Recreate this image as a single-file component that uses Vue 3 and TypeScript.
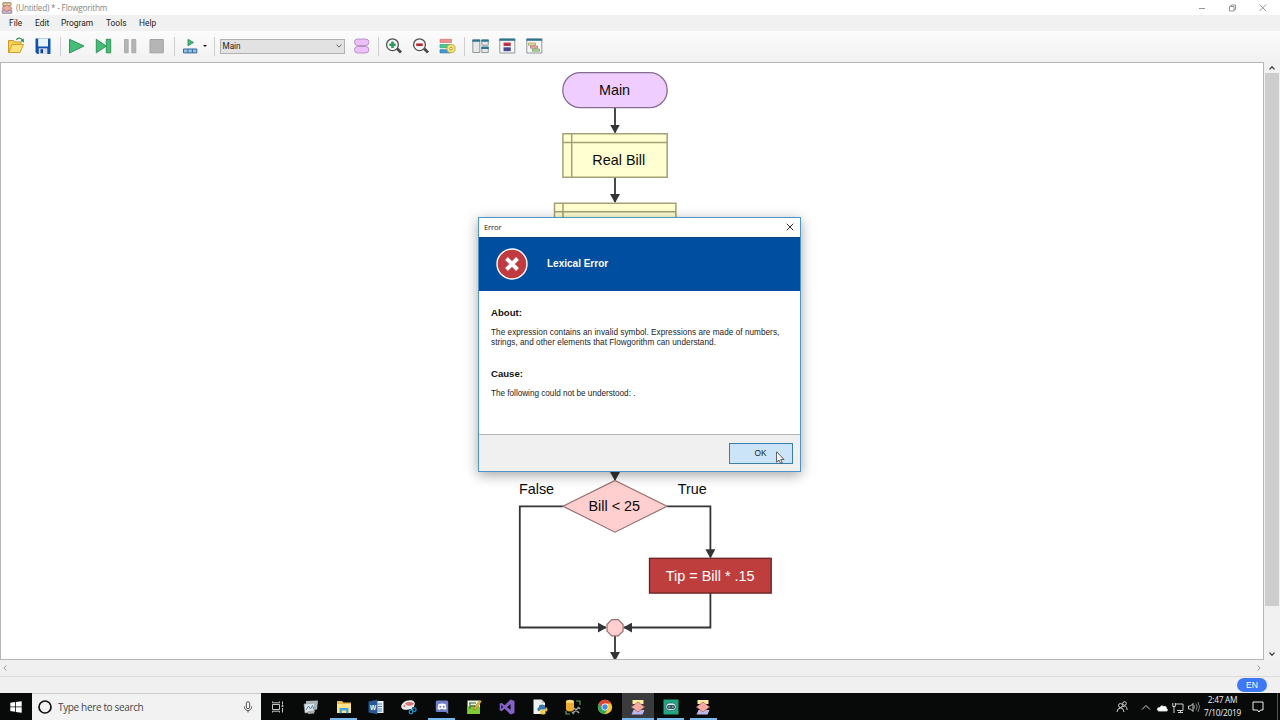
<script setup lang="ts">
interface MenuItem { label: string; width: number }

const menus: MenuItem[] = [
  { label: 'File', width: 26 },
  { label: 'Edit', width: 26 },
  { label: 'Program', width: 45 },
  { label: 'Tools', width: 33 },
  { label: 'Help', width: 30 },
]
</script>

<template>
  <div class="desktop">
    <header class="titlebar">
      <svg class="logo" viewBox="0 0 12 12" width="12" height="12">
        <path d="M2 .8h8l-1 3.5H2zM1.2 8h9.5v3.3H1.2z" fill="#c9b6dc" stroke="#8f7d74" stroke-width=".8" />
        <path d="M2 1h8v2.6H2z" fill="#eddca2" stroke="#9d8b58" stroke-width=".8" />
        <path d="M6 2.7 11 6.2 6 9.5 1 6.2z" fill="#f5a9a0" stroke="#a9766e" stroke-width=".8" />
      </svg>
      <span class="title">(Untitled) * - Flowgorithm</span>
      <svg class="winbtns" viewBox="0 0 80 14" width="80" height="14" fill="none" stroke="#8a8a8a" stroke-width=".9">
        <path d="M-1 7.500h6M29.500 5.500h4.500V10h-4.500zM31 5.500V4h4.500v4.500H34M59.500 3.500l6.500 6.500M66 3.500 59.500 10" />
      </svg>
    </header>
    <nav class="menubar">
      <span v-for="m in menus" :key="m.label" :style="{ width: m.width + 'px' }">{{ m.label }}</span>
    </nav>
    <div class="toolbar">
      <svg class="tool" viewBox="0 0 27 24">
        <path d="M5.500 18.500V6.500h5l1.500 1.500h6v3" fill="#f5cf55" stroke="#c99a25" />
        <path d="M5.800 18.500 9 10.500h11.500l-3.500 8z" fill="#ffe17a" stroke="#d0a02c" />
        <path d="M13.500 6c1-2.500 4.500-2.500 6 .500" fill="none" stroke="#2f9156" stroke-width="1.300" />
        <path d="m20.800 4.500.200 4-3.600-1.500z" fill="#2f9156" />
      </svg>
      <svg class="tool" viewBox="0 0 27 24">
        <path d="M5.500 4.500h15V20H7.300l-1.800-1.800z" fill="#1252ae" />
        <path d="M8.200 4.500h9.800v8H8.200z" fill="#e9f3fb" />
        <path d="M8.800 14.300h8.500V20H8.800z" fill="#d5deed" />
        <path d="M10.500 15.200h2.500v4h-2.500z" fill="#123f91" />
      </svg>
      <i class="sep"></i>
      <svg class="tool" viewBox="0 0 27 24"><path d="M6.500 5.300v13.700L21 12z" fill="#43bd78" stroke="#33945b" /></svg>
      <svg class="tool" viewBox="0 0 27 24"><path d="M6.300 5.300v13.500l10-6.700zM16.300 5.300h4.400v13.500h-4.400z" fill="#43bd78" stroke="#33945b" /></svg>
      <svg class="tool" viewBox="0 0 27 24"><path d="M7.500 5.500h3.700v13.300H7.500zM14.800 5.500h4v13.300h-4z" fill="#b5b5b5" stroke="#a2a2a2" stroke-width=".8" /></svg>
      <svg class="tool" viewBox="0 0 27 24"><path d="M6 5.500h13.300v13.300H6z" fill="#b5b5b5" stroke="#a2a2a2" /></svg>
      <i class="sep"></i>
      <svg class="tool run-menu" viewBox="0 0 27 24">
        <path d="M11 5.300v6.500l5.500-3.300z" fill="#43bd78" stroke="#33805b" stroke-width=".8" />
        <path d="M6.500 15h13.300v3.900H6.500zM10.900 15v4M15.400 15v4" fill="#8fc5e8" stroke="#386a96" />
      </svg>
      <i class="drop"></i>
      <i class="sep wide"></i>
      <div class="combo">
        <span>Main</span>
        <svg viewBox="0 0 6 4" width="6" height="4"><path d="m.5.600 2.500 2.500L5.500.600" fill="none" stroke="#555" stroke-width=".9" /></svg>
      </div>
      <svg class="tool after-combo" viewBox="0 0 27 24">
        <rect x="6.500" y="5" width="14.300" height="6.500" rx="3" fill="#eebfff" stroke="#a684b3" stroke-width=".8" />
        <rect x="6.500" y="12.500" width="14.300" height="6.500" rx="3" fill="#eebfff" stroke="#a684b3" stroke-width=".8" />
      </svg>
      <i class="sep"></i>
      <svg class="tool" viewBox="0 0 27 24">
        <path d="m17 14.500 4 4" stroke="#4a4a4a" stroke-width="2.800" />
        <circle cx="12.500" cy="10.700" r="5.900" fill="#f7fbfa" stroke="#505050" stroke-width="1.300" />
        <path d="M12.500 7.500v6.400M9.300 10.700h6.400" stroke="#2f9c5c" stroke-width="2.600" />
      </svg>
      <svg class="tool" viewBox="0 0 27 24">
        <path d="m17 14.500 4 4" stroke="#4a4a4a" stroke-width="2.800" />
        <circle cx="12.500" cy="10.700" r="5.900" fill="#faf7f7" stroke="#505050" stroke-width="1.300" />
        <path d="M9.200 10.700h6.600" stroke="#b92b31" stroke-width="2.600" />
      </svg>
      <svg class="tool" viewBox="0 0 27 24">
        <path d="M6 5.300h11.500v3.200H6z" fill="#f08e8e" stroke="#ce7474" stroke-width=".7" />
        <path d="M6 10.500h10v3.200H6z" fill="#45cb94" stroke="#389e7b" stroke-width=".7" />
        <path d="M6 15.700h10v3.200H6z" fill="#3b99dc" stroke="#3979a9" stroke-width=".7" />
        <circle cx="17" cy="14.600" r="4.100" fill="#f8e777" stroke="#b7a236" stroke-width=".9" />
        <circle cx="17" cy="14.600" r="1.400" fill="#fffce0" stroke="#a29136" stroke-width=".9" />
      </svg>
      <i class="sep"></i>
      <svg class="tool" viewBox="0 0 27 24">
        <path d="M5.800 6h7v12.500h-7zM14.800 6h6.500v5.200h-6.500zM14.800 13h6.500v5.500h-6.500z" fill="#e7e9e9" stroke="#778186" stroke-width=".8" />
        <path d="M5.400 5.500h7.800v2.200H5.400zM14.400 5.500h7.300v2.200h-7.300zM14.400 12.700h7.300v2.200h-7.300z" fill="#2d758c" />
      </svg>
      <svg class="tool" viewBox="0 0 27 24">
        <path d="M5.800 5h15v14h-15z" fill="#f7f7f7" stroke="#778186" stroke-width=".8" />
        <path d="M5.400 4.600h15.800v2.200H5.400z" fill="#2d758c" />
        <path d="M9.500 8.500h7.300v3.600H9.500z" fill="#c73f4c" /><path d="M9.500 13.300h7.300v3.900H9.500z" fill="#414f9b" />
        <path d="M10.500 10.500h5M10.500 15h5" stroke="#722e53" stroke-width=".7" />
      </svg>
      <svg class="tool" viewBox="0 0 27 24">
        <path d="M5.800 5h15v14h-15z" fill="#f7f7f7" stroke="#778186" stroke-width=".8" />
        <path d="M5.400 4.600h15.800v2.200H5.400z" fill="#2d758c" />
        <path d="M7.500 9h7v2.300h-7z" fill="#e9e19a" stroke="#a1955c" stroke-width=".7" />
        <path d="M9.500 12h7v2.200h-7z" fill="#f1b4ae" stroke="#a96e6c" stroke-width=".7" />
        <path d="M11.500 15h7v2.200h-7z" fill="#b5dd9f" stroke="#6a965e" stroke-width=".7" />
      </svg>
    </div>

    <main class="workspace">
      <section class="canvas">
        <svg class="chart" viewBox="1 63 1262 596" width="1262" height="596">
          <defs>
            <marker id="arrow" viewBox="0 0 9 10" refX="8" refY="5" markerWidth="9" markerHeight="10" markerUnits="userSpaceOnUse" orient="auto">
              <path d="M0 0v10l9-5z" fill="#333537" />
            </marker>
          </defs>
          <g class="links">
            <path d="M615 108v24.500" /><path d="M615 178v24" /><path d="M615 460v20" />
            <path d="M563 506.300h-43.200v121.200h86" /><path d="M667 506.300h43.400v51" />
            <path d="M710.400 593v34.500h-86.200" /><path d="M615 636v24" />
          </g>
          <rect x="562.800" y="72.700" width="104.400" height="35" rx="17.500" fill="#efcdff" stroke="#856b91" stroke-width="1.300" />
          <g fill="#ffffd1" stroke="#a4a176" stroke-width="1.500">
            <path d="M562.900 133.700h104.300v43.600H562.900zM562.900 142.500h104.300M571.700 133.700v43.600" />
            <path d="M554.500 203.300h121.400v43.500H554.500zM554.500 211.800h121.400M563 203.300v43.500" />
          </g>
          <path d="M615 480.500 667 506.300 615 532.200 563 506.300z" fill="#ffcfcf" stroke="#956e70" stroke-width="1.200" />
          <rect x="649.500" y="558.300" width="121.700" height="34.800" fill="#be3e3e" stroke="#652224" stroke-width="1.300" />
          <path d="M611.700 619.700h6.600l4.800 4.800v6.600l-4.800 4.700h-6.600l-4.700-4.700v-6.600z" fill="#ffcfcf" stroke="#956e70" stroke-width="1.200" stroke-linejoin="round" />
          <g class="labels">
            <text x="614.500" y="95.200">Main</text><text x="618.700" y="164.500">Real Bill</text>
            <text x="614.300" y="511.200">Bill &lt; 25</text>
            <text x="536.500" y="494">False</text><text x="692.300" y="494">True</text>
            <text class="light" x="710.200" y="580.700">Tip = Bill * .15</text>
          </g>
        </svg>
      </section>
      <aside class="vscroll">
        <svg viewBox="0 0 6 4" width="6" height="4"><path d="m.500 3.300 2.500-2.500 2.500 2.500" /></svg>
        <div class="thumb"></div>
        <svg viewBox="0 0 6 4" width="6" height="4"><path d="m.500.700 2.500 2.500L5.500.700" /></svg>
      </aside>
    </main>
    <div class="hscroll">
      <svg viewBox="0 0 4 6" width="4" height="6"><path d="M3.400.500.900 3l2.500 2.500" /></svg>
      <svg viewBox="0 0 4 6" width="4" height="6"><path d="M.600.500 3.100 3 .600 5.500" /></svg>
    </div>
    <footer class="status"><span class="lang">EN</span></footer>

    <div class="taskbar">
      <div class="start"><svg viewBox="0 0 12 12" width="12" height="12"><path d="m.300 1.800 4.700-.700v4.400H.300zM5.800 1l5.900-.800v5.300H5.800zM.300 6.300H5v4.400L.300 10zM5.800 6.300h5.900v5.400l-5.900-.800z" fill="#fff" /></svg></div>
      <div class="search">
        <svg viewBox="0 0 14 14" width="14" height="14"><circle cx="7" cy="7" r="6" fill="none" stroke="#111" stroke-width="1.700" /></svg>
        <span>Type here to search</span>
        <svg viewBox="0 0 10 12" width="10" height="12" fill="none" stroke="#444" stroke-width=".9"><rect x="3.300" y=".700" width="3.400" height="7" rx="1.700" /><path d="M1.500 5.500v1c0 4 7 4 7 0v-1M5 9.500v2" /></svg>
      </div>
      <div class="apps">
        <div class="app"><svg viewBox="0 0 16 16" fill="none" stroke="#ddd" stroke-width=".9"><path d="M2.500 5.500h7v5h-7zM2.500 2.500v1.300h7V2.500M2.500 13.500v-1.300h7v1.300M12.500 2.500v3M12.500 9v4.500" /><path d="M11.700 7h1.600" stroke-width="1.700" /></svg></div>
        <div class="app"><svg viewBox="0 0 16 16"><path d="m3 2 12-.500-1 9-11 1.500z" fill="#aeb6ba" /><path d="m1 5 11-1-1 9-9 1z" fill="#dbe3e6" stroke="#88969d" stroke-width=".6" /><path d="m3 11 2.500-4 2 3 2-3.500 1.500 4" fill="none" stroke="#558caf" /><path d="m5 12 7-.500-1 3-6 .500z" fill="#a7abad" /></svg></div>
        <div class="app open"><svg viewBox="0 0 16 16"><path d="M1 2h5l1.500 1.500H15V14H1z" fill="#e9b94c" /><path d="M1 5h14v9H1z" fill="#ffe48c" /><path d="M3.500 9h9v5.300H10v-2.700H6v2.700H3.500z" fill="#45a9dd" /></svg></div>
        <div class="app"><svg viewBox="0 0 16 16"><path d="M8 2h7.500v12H8z" fill="#edf3fa" /><path d="M10 5h4M10 7.500h4M10 10h4M10 12h4" stroke="#447abb" /><path d="m.500 2.500 9-1.700v14.400l-9-1.700z" fill="#285895" /><text x="2" y="10.800" class="word">W</text></svg></div>
        <div class="app"><svg viewBox="0 0 16 16"><ellipse cx="7" cy="6" rx="7" ry="4.500" fill="#efefef" transform="rotate(-20 7 6)" /><path d="M2 7.500C4 3 8 2 13 4c-2 5-7 5-11 3.500" fill="#d67476" /><path d="m3 5 9 6M4 8l9-1" stroke="#eee" stroke-width="1.300" /><circle cx="10" cy="13" r="1.800" fill="none" stroke="#268bc5" stroke-width="1.300" /><circle cx="13.300" cy="10.700" r="1.800" fill="none" stroke="#268bc5" stroke-width="1.300" /></svg></div>
        <div class="app open"><svg viewBox="0 0 16 16"><path d="M3.300 1.500h9.400q1.500 0 1.500 1.500v12l-2.500-2H3.300q-1.500 0-1.500-1.500V3q0-1.500 1.500-1.500z" fill="#717ec8" /><path d="M4.500 5q3.500-1 7 0l1 4.800q-1 1-2.500 1l-.500-.800h-3l-.500.800q-1.500 0-2.500-1z" fill="#fff" /><circle cx="6.300" cy="7.700" r="1" fill="#717ec8" /><circle cx="9.800" cy="7.700" r="1" fill="#717ec8" /></svg></div>
        <div class="app"><svg viewBox="0 0 16 16"><path d="M1.500 1.500H14V15H1.500z" fill="#e9f7d9" /><path d="M1.500 8q6-4 12.500 0v7H1.500z" fill="#7fcb34" /><path d="M3 4h7M4 4v6M4 7h5" stroke="#455" stroke-width="1" /><path d="m8 9 6-8 1.500 1.500-6 8L7.500 11z" fill="#edb441" stroke="#865f28" stroke-width=".5" /></svg></div>
        <div class="app"><svg viewBox="0 0 16 16"><path fill-rule="evenodd" d="m11.500.500 4 1.500v12l-4 1.500-5.800-5.700-3.200 2.400L.700 11.300V4.700l1.800-.900 3.200 2.400zM11.500 5 8 8l3.500 3zM2.300 6.200v3.600L4.200 8z" fill="#8661c5" /></svg></div>
        <div class="app"><svg viewBox="0 0 16 16"><path d="M1.500.500h8L13 4v11H1.500z" fill="#eef1f2" /><path d="M9.500.500V4H13" fill="#bdc6cb" /><path d="M7 8.500V7q0-1.500 3-1.500t3 1.500v2.500q0 1-1 1H9q-1.500 0-1.500 1.500H6q-1.500-2 0-3.500z" fill="#3979ac" /><path d="M13.500 8.500h1.200q1.500 2 0 4h-3.500v.800h2.500V14q0 1.500-2.700 1.500T8.300 14v-2q0-1 1.200-1H12q1.500 0 1.500-1.500z" fill="#f2c63e" /></svg></div>
        <div class="app"><svg viewBox="0 0 16 16"><path d="M1 2v9q4 3 8 0V2z" fill="#eaab2f" /><ellipse cx="5" cy="2.500" rx="4" ry="1.700" fill="#ffda73" /><path d="M11 2h4v4M1 12v3h4" fill="none" stroke="#5ba25a" stroke-width="1.200" /><path d="m8 14 5-5M9 9l5 5M13 8l2 2M7 13l2 2" stroke="#9c9e9d" stroke-width="1.700" /></svg></div>
        <div class="app"><svg viewBox="0 0 16 16"><circle cx="8" cy="8" r="7.200" fill="#fbc62d" /><path d="M1.800 4.400A7.200 7.200 0 0 1 14.200 4.400H8L5 9.800z" fill="#df4638" /><path d="M1.800 4.400A7.200 7.200 0 0 0 7.500 15.200L11 9.800H5z" fill="#2ea55c" /><circle cx="8" cy="8" r="3.400" fill="#fff" /><circle cx="8" cy="8" r="2.700" fill="#4b88e8" /></svg></div>
        <div class="app open active"><svg viewBox="0 0 16 16"><path d="M2.500 1h11v4h-11z" fill="#ffeca2" /><path d="M3.500 11h11l-2 4.500h-11z" fill="#bfb8ed" /><path d="m8 3 6.700 5L8 13 1.300 8z" fill="#f9aaa2" stroke="#8c544f" stroke-width=".6" /></svg></div>
        <div class="app open"><svg viewBox="0 0 16 16"><path d="M.500.500h15v15H.500z" fill="#20a780" /><rect x="2.800" y="4" width="10.400" height="7.500" rx="3.700" fill="#d8eeee" stroke="#285c61" stroke-width=".7" /><rect x="4" y="6" width="8" height="4" rx="1.700" fill="#35575e" /><path d="M5.500 8h1.300M9.200 8h1.300" stroke="#cef9f1" /></svg></div>
        <div class="app open"><svg viewBox="0 0 16 16"><path d="M2.500 1h11v4h-11z" fill="#ffeca2" /><path d="M3.500 11h11l-2 4.500h-11z" fill="#bfb8ed" /><path d="m8 3 6.700 5L8 13 1.300 8z" fill="#f9aaa2" stroke="#8c544f" stroke-width=".6" /></svg></div>
      </div>
      <svg class="tray" viewBox="0 0 84 26" width="84" height="26" fill="none" stroke="#e3e3e3" stroke-width=".9">
        <circle cx="10.500" cy="11.500" r="2" /><circle cx="14.500" cy="9.500" r="1.800" /><path d="M7 18q.300-4 3.500-4t3.500 4M12.500 13q4-3 4.700 3" />
        <path d="m32 15.500 4-4 4 4" />
        <path d="M48.500 17q-2-1-.800-2.700 1-1 2-.600 1.500-3 4-1.300 3-.300 3 2.300 1.500 1 .300 2.300z" fill="#fff" />
        <path d="M65 10h8v6.500h-6M68 18.500h5M70.500 16.500v2M62.800 9v3.500h2.500V9M64 12.500v6.500" />
        <path d="M78.500 12h2l2.500-2.500v8L80.500 15h-2z" />
      </svg>
      <svg class="waves" viewBox="0 0 8 12" width="8" height="12" fill="none" stroke="#999" stroke-width=".8"><path d="M1 4q1.300 2 0 4M3 2.500q2.300 3.500 0 7M5 1q3 5 0 10" /></svg>
      <div class="clock"><span>2:47 AM</span><span>7/10/2019</span></div>
      <svg class="notice" viewBox="0 0 12 12" width="12" height="12" fill="none" stroke="#eee"><path d="M1 1h10v8H8.500L7 11 5.500 9H1z" /></svg>
      <i class="show-desktop"></i>
    </div>

    <div class="dialog">
      <div class="dlg-title"><span>Error</span><svg viewBox="0 0 8 8" width="8" height="8"><path d="m.700.700 6.600 6.600M7.300.700.700 7.300" stroke="#333" stroke-width="1" /></svg></div>
      <div class="dlg-head">
        <svg viewBox="0 0 32 32" width="32" height="32"><circle cx="16" cy="16" r="15" fill="#bf3b40" stroke="#fff" stroke-width="1.400" /><path d="m10.500 10.500 11 11M21.500 10.500l-11 11" stroke="#fff" stroke-width="4" /></svg>
        <strong>Lexical Error</strong>
      </div>
      <div class="dlg-body">
        <h2>About:</h2>
        <p class="about">The expression contains an invalid symbol. Expressions are made of numbers,<br>strings, and other elements that Flowgorithm can understand.</p>
        <h2 class="cause">Cause:</h2>
        <p class="reason">The following could not be understood: .</p>
      </div>
      <div class="dlg-foot"><button>OK</button></div>
    </div>
    <svg class="cursor" viewBox="0 0 9 13" width="9" height="13"><path d="M.600.800v10.400l2.400-2.200 1.600 3.400 1.700-.800-1.600-3.200H8z" fill="#fff" stroke="#333" stroke-width=".8" /></svg>
  </div>
</template>

<style>
html, body { margin: 0; overflow: hidden; }
</style>

<style scoped>
* { box-sizing: border-box; }
.desktop { position: relative; width: 1280px; height: 720px; display: flex; flex-direction: column; background: #f0f0f0; font-family: "Open Sans", "Noto Sans", sans-serif; color: #1c1c1c; overflow: hidden; }
svg { display: block; flex: none; }
.titlebar { height: 15px; display: flex; align-items: center; background: #fff; }
.logo { margin-left: 1px; margin-right: 3px; }
.title { font-size: 8.200px; line-height: 15px; color: #858585; white-space: nowrap; letter-spacing: -.22px; }
.winbtns { margin-left: auto; overflow: visible; }
.menubar { height: 16px; padding-left: 9px; display: flex; font-family: Roboto, sans-serif; font-size: 8.400px; line-height: 16px; background: #f1f1f1; }
.toolbar { height: 31px; display: flex; align-items: center; padding: 0 0 1px 3px; background: linear-gradient(#fcfcfc, #f1f1f1); }
.tool { width: 27px; height: 24px; }
.sep { width: 6px; height: 19px; flex: none; display: block; border-left: 1px solid #cecece; margin-left: 3px; margin-right: -3px; }
.run-menu { margin-left: -.500px; }
.drop { width: 4px; border: 2px solid transparent; border-top-color: #111; border-bottom: 0; margin-left: -1px; }
.sep.wide { margin-left: 7px; margin-right: 0; }
.combo { width: 125px; height: 15px; display: flex; align-items: center; justify-content: space-between; padding: 0 2px; background: #e2e2e2; border: 1px solid #b1b1b1; font: 8.200px Roboto, sans-serif; }
.after-combo { margin-left: 3px; }
.combo + .after-combo + .sep { margin-right: -4px; }
.workspace { height: 598px; display: flex; }
.canvas { width: 1264px; border: 1px solid #b6b6b6; background: #fff; }
.chart { overflow: hidden; }
.links { fill: none; stroke: #333537; stroke-width: 1.800px; }
.links path { marker-end: url(#arrow); }
.labels { font-family: "Liberation Sans", Arial, sans-serif; font-size: 14.400px; fill: #0b0b0b; text-anchor: middle; }
.labels .light { fill: #fff; }
.vscroll { width: 16px; display: flex; flex-direction: column; align-items: center; padding-top: 4px; background: #f1f1f1; }
.vscroll svg path { fill: none; stroke: #333; stroke-width: 1.200px; }
.thumb { width: 14px; height: 533px; margin: 3px 0 46px; background: #cdcdcd; }
.hscroll { height: 17px; display: flex; justify-content: space-between; align-items: center; padding: 0 19px 1px 3px; border-bottom: 1px solid #dadada; }
.hscroll path { fill: none; stroke: #9c9c9c; stroke-width: 1px; }
.status { height: 16px; display: flex; justify-content: flex-end; align-items: center; padding-right: 13px; }
.lang { width: 30px; height: 14px; border-radius: 7px; background: #3f78f4; color: #fff; font: 8.500px/14px "Liberation Sans", sans-serif; text-align: center; }
.taskbar { height: 27px; display: flex; align-items: center; background: #080a09; color: #eee; }
.start { width: 32px; padding-left: 10px; }
.search { width: 229px; height: 27px; background: #f2f2f2; border-top: 1px solid #ccc; color: #454545; display: flex; align-items: center; padding: 0 8px 0 6px; font-size: 10px; letter-spacing: -.35px; }
.search span { margin-left: 6px; flex: 1; white-space: nowrap; }
.apps { display: flex; height: 27px; margin-left: 1px; }
.app { width: 32.700px; height: 27px; display: flex; align-items: center; justify-content: center; position: relative; }
.app svg { width: 16px; height: 16px; }
.app.open::after { content: ""; position: absolute; left: 3px; right: 3px; bottom: 0; height: 2px; background: #76b9ed; }
.app.active { background: #393b3c; }
.app.active::after { left: 0; right: 0; }
.word { font: bold 6.500px "Liberation Sans", sans-serif; fill: #fff; letter-spacing: 0; }
.tray { margin-left: auto; }
.waves { margin-left: -1px; }
.clock { width: 47px; margin-left: -2px; display: flex; flex-direction: column; align-items: center; font-size: 8.300px; line-height: 12.500px; letter-spacing: -.25px; }
.notice { margin-left: 6px; }
.show-desktop { width: 1px; height: 27px; background: #555; margin: 0 2px 0 13px; }
.dialog { position: absolute; left: 478px; top: 217px; width: 323px; height: 255px; background: #fff; border: 1px solid #4d97c8; box-shadow: 0 3px 12px rgba(0, 0, 0, .36); display: flex; flex-direction: column; font-family: "Liberation Sans", Arial, sans-serif; }
.dlg-title { height: 19px; padding: 0 6px 1px 5px; display: flex; justify-content: space-between; align-items: center; font: 7.700px "Open Sans", sans-serif; letter-spacing: -.2px; }
.dlg-head { height: 54px; padding: 0 0 2px 17px; display: flex; align-items: center; background: #004e9f; border-top: 1px solid #064785; color: #fff; }
.dlg-head strong { margin-left: 19px; font-size: 10px; }
.dlg-body { height: 143px; padding: 16px 0 0 12px; }
.dlg-body h2 { margin: 0; font-size: 9.600px; line-height: 12px; color: #111; }
.dlg-body p { margin: 9px 0 0; font-size: 8.200px; line-height: 10px; white-space: nowrap; }
.dlg-body .cause { margin-top: 20px; }
.dlg-body .about { letter-spacing: .040px; }
.dlg-body .reason { letter-spacing: -.02px; }
.dlg-foot { flex: 1; border-top: 1px solid #b5b5b5; background: #f0f0f0; display: flex; justify-content: flex-end; padding: 8px 7px 0 0; }
.dlg-foot button { width: 64px; height: 21px; border: 1px solid #397eae; background: #cce4f7; padding: 0 1px 2px 0; font: 8.300px "Liberation Sans", sans-serif; color: #222; }
.cursor { position: absolute; left: 776px; top: 451px; }
</style>
